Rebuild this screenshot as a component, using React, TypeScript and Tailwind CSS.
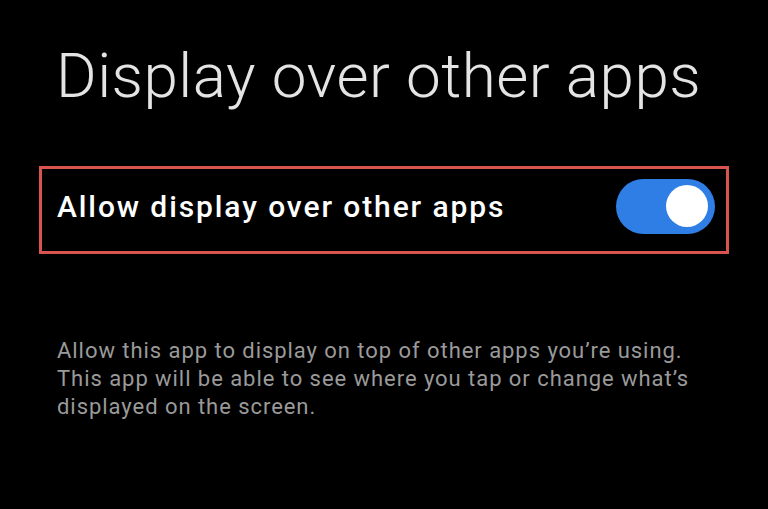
import React from "react";

export default function App() {
  return (
    <div className="w-[768px] h-[509px] bg-black overflow-hidden" style={{ fontFamily: "Roboto, 'Noto Sans', sans-serif" }}>
      <div className="pl-[56px] pt-[40px]">
        <h1 className="text-[62px] font-light leading-[72px] text-[#e4e4e4] tracking-[0.5px]">Display over other apps</h1>
      </div>
      <div className="mx-[39px] mt-[54px] h-[88px] border-[3px] border-[#d9534f] flex items-center justify-between pl-[15px] pr-[11px] pb-[8px]">
        <span className="text-[30px] font-medium text-white tracking-[1.9px] leading-[45px]">Allow display over other apps</span>
        <div className="w-[99px] h-[55px] rounded-full bg-[#2f7ee6] flex items-center justify-end pr-[7px]">
          <div className="w-[42px] h-[42px] rounded-full bg-white" />
        </div>
      </div>
      <p className="mx-[57px] mt-[83px] text-[22px] leading-[28px] text-[#9a9a9a] tracking-[0.95px]">
        Allow this app to display on top of other apps you’re using.
        <br />
        This app will be able to see where you tap or change what’s
        <br />
        displayed on the screen.
      </p>
    </div>
  );
}
